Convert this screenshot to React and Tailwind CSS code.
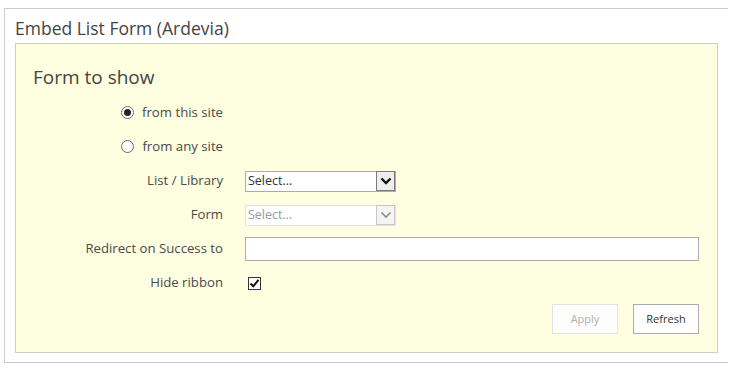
import React from 'react';

const font = { fontFamily: '"Open Sans", "Noto Sans", sans-serif' };

const Chevron = ({ disabled }) => (
  <svg width="12" height="8" viewBox="0 0 12 8">
    <path
      d="M1.5 1.5 L6 6 L10.5 1.5"
      fill="none"
      stroke={disabled ? '#8a8a8a' : '#111'}
      strokeWidth={disabled ? 1.6 : 2.4}
    />
  </svg>
);

const FakeSelect = ({ disabled }) => (
  <div
    className={`flex items-center w-[151px] h-[21px] border pl-[2px] ${
      disabled ? 'border-[#e1e1e1] bg-white text-[#9a9a9a]' : 'border-[#ababab] bg-white text-[#333]'
    }`}
  >
    <span className="flex-1 text-[12.5px] leading-none">Select...</span>
    <div
      className={`flex items-center justify-center w-[19px] h-[20px] border ${
        disabled ? 'border-[#c8c8c8] bg-[#f4f4f4]' : 'border-[#7a7a7a] bg-[#eeeeee]'
      }`}
    >
      <Chevron disabled={disabled} />
    </div>
  </div>
);

const Radio = ({ checked }) => (
  <span className="inline-flex items-center justify-center w-[13px] h-[13px] rounded-full border border-[#6a6a6a] bg-white">
    {checked && <span className="w-[7px] h-[7px] rounded-full bg-[#222]" />}
  </span>
);

const Row = ({ label, children }) => (
  <div className="flex items-center h-[34px]">
    <div className="w-[190px] flex justify-end items-center text-[13.2px] text-[#4a4a4a]">{label}</div>
    <div className="ml-[22px] flex items-center">{children}</div>
  </div>
);

export default function App() {
  return (
    <div className="w-[740px] h-[371px] bg-white pt-[8px] pl-[4px]" style={font}>
      <div className="w-[724px] h-[355px] border-l border-t border-b border-[#cccccc]">
        <div className="pl-[10px] pt-[9px] h-[34px] text-[17.5px] leading-[20px] text-[#444]">
          Embed List Form (Ardevia)
        </div>
        <div className="ml-[10px] w-[703px] h-[310px] border border-[#cfcfbf] bg-[#fefee0] pl-[17px] pr-[18px]">
          <div className="pt-[21px] text-[19px] leading-[24px] text-[#444]">Form to show</div>
          <div className="mt-[7px]">
            <Row
              label={
                <span className="flex items-center gap-[8px]">
                  <Radio checked />
                  from this site
                </span>
              }
            />
            <Row
              label={
                <span className="flex items-center gap-[8px]">
                  <Radio />
                  from any site
                </span>
              }
            />
            <Row label="List / Library">
              <FakeSelect />
            </Row>
            <Row label="Form">
              <FakeSelect disabled />
            </Row>
            <Row label="Redirect on Success to">
              <div className="w-[454px] h-[24px] border border-[#ababab] bg-white" />
            </Row>
            <Row label="Hide ribbon">
              <span className="ml-[3px] flex items-center justify-center w-[13px] h-[13px] border border-[#333] bg-white">
                <svg width="11" height="11" viewBox="0 0 11 11">
                  <path d="M1.5 5.5 L4.2 8.3 L9.5 1.8" fill="none" stroke="#111" strokeWidth="2" />
                </svg>
              </span>
            </Row>
          </div>
          <div className="mt-[4px] flex justify-end gap-[15px]">
            <button className="w-[66px] h-[30px] border border-[#e3e3e3] bg-[#fdfdfb] text-[11px] text-[#b0b0b0]">
              Apply
            </button>
            <button className="w-[66px] h-[30px] border border-[#ababab] bg-white text-[11px] text-[#333]">
              Refresh
            </button>
          </div>
        </div>
      </div>
    </div>
  );
}
